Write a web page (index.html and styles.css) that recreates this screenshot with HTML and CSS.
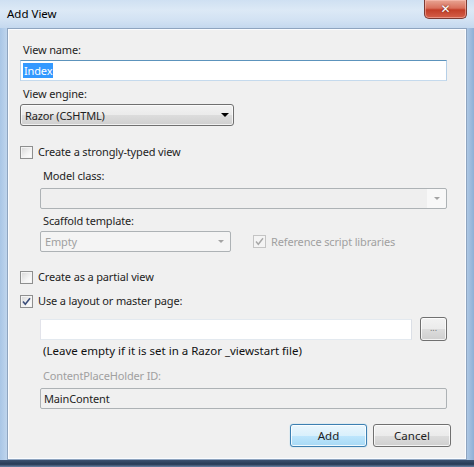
FILE: index.html
```html
<!DOCTYPE html>
<html>
<head>
<meta charset="utf-8">
<title>Add View</title>
<link rel="stylesheet" href="styles.css">
</head>
<body>
<div class="window">
  <div class="titlebar">
    <span class="title">Add View</span>
    <div class="close"><span class="close-x">✕</span></div>
  </div>
  <div class="client">
    <div class="label">View name:</div>
    <div class="textbox focused wide"><span class="sel">Index</span></div>
    <div class="label">View engine:</div>
    <div class="combo engine"><span>Razor (CSHTML)</span><span class="arrow"></span></div>
    <div class="checkrow first"><span class="check"></span><span>Create a strongly-typed view</span></div>
    <div class="label indent">Model class:</div>
    <div class="combo disabled model"><span></span><span class="arrow grey"></span></div>
    <div class="label indent">Scaffold template:</div>
    <div class="scaffold-row">
      <div class="combo disabled scaffold"><span class="grey-text">Empty</span><span class="arrow grey"></span></div>
      <div class="checkrow inline disabled-text"><span class="check checked dis"><svg viewBox="0 0 13 13" width="13" height="13"><path d="M3 6.5 L5.3 9.3 L10 3.2" fill="none" stroke="#a8a8a8" stroke-width="1.4"/></svg></span><span>Reference script libraries</span></div>
    </div>
    <div class="checkrow partial"><span class="check"></span><span>Create as a partial view</span></div>
    <div class="checkrow layout"><span class="check checked"><svg viewBox="0 0 13 13" width="13" height="13"><path d="M3 6.5 L5.3 9.3 L10 3.2" fill="none" stroke="#3b4e7a" stroke-width="1.6"/></svg></span><span>Use a layout or master page:</span></div>
    <div class="layout-row">
      <div class="textbox layout-input"></div>
      <div class="btn browse">...</div>
    </div>
    <div class="label indent hint">(Leave empty if it is set in a Razor _viewstart file)</div>
    <div class="label indent disabled-text cph">ContentPlaceHolder ID:</div>
    <div class="textbox disabled-box maincontent"><span>MainContent</span></div>
    <div class="buttons">
      <div class="btn default">Add</div>
      <div class="btn">Cancel</div>
    </div>
  </div>
</div>
</body>
</html>
```

FILE: styles.css
```css
html, body {
  margin: 0;
  padding: 0;
}
body {
  width: 474px;
  height: 467px;
  overflow: hidden;
  font-family: "Noto Sans", "Open Sans", sans-serif;
  font-size: 11px;
  letter-spacing: -0.15px;
  color: #1e1e1e;
}
.window {
  width: 474px;
  height: 467px;
  display: flex;
  flex-direction: column;
  background: linear-gradient(90deg, #a9c6e6 0px, #c2d7ee 8px, #d6e5f4 40%, #c8dbef 80%, #b7cfe9 98%, #8fb0d6 100%);
  position: relative;
}
.titlebar {
  height: 28px;
  display: flex;
  align-items: flex-start;
  background: linear-gradient(180deg, #cfe0f2 0px, #dce9f6 10px, #d2e2f3 20px, #c4d8ee 28px);
}
.title {
  margin: 6px 0 0 7px;
  font-size: 11.5px;
  letter-spacing: 0;
  color: #000;
  line-height: 16px;
}
.close {
  margin-left: auto;
  margin-right: 7px;
  width: 43px;
  height: 19px;
  border: 1px solid #7a3a33;
  border-top: none;
  border-radius: 0 0 5px 5px;
  box-sizing: border-box;
  background: linear-gradient(180deg, #e8a593 0%, #d9705c 45%, #c23e28 55%, #d4604a 100%);
  display: flex;
  align-items: center;
  justify-content: center;
  box-shadow: inset 0 0 0 1px rgba(255, 200, 190, 0.5);
}
.close-x {
  color: #fff;
  font-size: 12px;
  font-weight: bold;
  line-height: 12px;
  text-shadow: 0 0 2px #5a1a10;
  font-family: "DejaVu Sans", sans-serif;
}
.client {
  flex: 1;
  margin: 0 7px 7px 7px;
  background: #f0f0f0;
  border: 1px solid #8ea4bf;
  box-shadow: inset 0 0 0 1px #fafcff;
  padding: 13px 19px 0 12px;
  position: relative;
}
.window::after {
  content: "";
  position: absolute;
  left: 0;
  right: 0;
  bottom: 0;
  height: 7px;
  background: linear-gradient(180deg, #3d5170 0%, #283a55 60%, #6c84a6 100%);
}
.label {
  line-height: 16px;
  height: 16px;
  margin-left: 3px;
  white-space: nowrap;
}
.label.indent {
  margin-left: 23px;
}
.textbox {
  height: 21px;
  box-sizing: border-box;
  background: #fff;
  border: 1px solid #abadb3;
  border-top-color: #e3e9ef;
  border-left-color: #e2e3ea;
  border-right-color: #dbdfe6;
  border-bottom-color: #e3e9ef;
  display: flex;
  align-items: center;
  padding-left: 2px;
}
.textbox.focused {
  border: 1px solid #7da2ce;
  border-top-color: #5c93bc;
  border-bottom-color: #c5daed;
  border-left-color: #b5cfe7;
  border-right-color: #b5cfe7;
}
.wide {
  width: 427px;
  margin-top: 2px;
}
.sel {
  background: #3399ff;
  color: #fff;
  line-height: 15px;
  padding: 0 1px;
}
.textbox + .label {
  margin-top: 5px;
}
.combo {
  box-sizing: border-box;
  height: 22px;
  display: flex;
  align-items: center;
  justify-content: space-between;
  padding: 0 4px 0 4px;
}
.engine {
  width: 214px;
  margin-top: 2px;
  border: 1px solid #707070;
  border-radius: 3px;
  background: linear-gradient(180deg, #f2f2f2 0%, #ebebeb 50%, #dddddd 50%, #cfcfcf 100%);
  box-shadow: inset 0 0 0 1px rgba(255, 255, 255, 0.7);
}
.arrow {
  width: 0;
  height: 0;
  border-left: 4px solid transparent;
  border-right: 4px solid transparent;
  border-top: 4px solid #000;
}
.arrow.grey {
  border-top-color: #a3a3a3;
  border-left-width: 3px;
  border-right-width: 3px;
  border-top-width: 3px;
  margin-right: 2px;
}
.combo.disabled {
  height: 21px;
  background: #f4f4f4;
  border: 1px solid #adb2b5;
  border-radius: 2px;
  margin-left: 20px;
}
.model {
  width: 407px;
  margin-top: 4px;
  background: linear-gradient(90deg, #efefef 0, #efefef 386px, #f8f8f8 386px) !important;
}
.scaffold {
  width: 191px;
}
.grey-text, .disabled-text {
  color: #a0a0a0;
}
.checkrow {
  display: flex;
  align-items: center;
  height: 16px;
  line-height: 16px;
  white-space: nowrap;
}
.check {
  width: 13px;
  height: 13px;
  box-sizing: border-box;
  border: 1px solid #8e8f8f;
  background: linear-gradient(135deg, #d6d6d6 0%, #f4f4f4 60%, #ffffff 100%);
  box-shadow: inset 0 0 0 1px #f4f4f4;
  margin-right: 5px;
  position: relative;
}
.check svg {
  position: absolute;
  left: -1px;
  top: -1px;
}
.check.dis {
  border-color: #c4c4c4;
  background: #f4f4f4;
}
.checkrow.first {
  margin-top: 18px;
}
.model + .label {
  margin-top: 4px;
}
.checkrow.first + .label {
  margin-top: 8px;
}
.scaffold-row {
  display: flex;
  align-items: center;
  margin-top: 2px;
  height: 21px;
}
.checkrow.inline {
  margin-left: 22px;
}
.checkrow.partial {
  margin-top: 17px;
}
.checkrow.layout {
  margin-top: 8px;
}
.layout-row {
  display: flex;
  align-items: center;
  margin-top: 8px;
  margin-left: 20px;
  height: 24px;
  gap: 8px;
}
.layout-input {
  width: 372px;
}
.btn {
  box-sizing: border-box;
  height: 23px;
  border: 1px solid #707070;
  border-radius: 3px;
  background: linear-gradient(180deg, #f2f2f2 0%, #ebebeb 50%, #dddddd 50%, #cfcfcf 100%);
  box-shadow: inset 0 0 0 1px rgba(255, 255, 255, 0.75);
  display: flex;
  align-items: center;
  justify-content: center;
  width: 78px;
  color: #1e1e1e;
  font-size: 11.5px;
  letter-spacing: 0;
}
.browse {
  width: 27px;
  height: 24px;
  font-size: 9px;
  color: #777;
  line-height: 10px;
  padding-bottom: 2px;
}
.hint {
  margin-top: 2px;
  font-size: 11.5px;
  letter-spacing: 0;
  color: #101010;
}
.cph {
  margin-top: 9px;
}
.disabled-box {
  margin-left: 20px;
  width: 407px;
  margin-top: 4px;
  background: #f0f0f0;
  border: 1px solid #adb2b5;
  border-radius: 2px;
  padding-left: 3px;
}
.buttons {
  display: flex;
  justify-content: flex-end;
  gap: 6px;
  margin-top: 15px;
  margin-right: -4px;
}
.btn.default {
  width: 77px;
  border-color: #3c7fb1;
  background: linear-gradient(180deg, #eaf6fd 0%, #d9f0fc 50%, #bee6fd 50%, #a7d9f5 100%);
  box-shadow: inset 0 0 0 1px rgba(255, 255, 255, 0.8), 0 0 1px #48b3e8;
}
```
